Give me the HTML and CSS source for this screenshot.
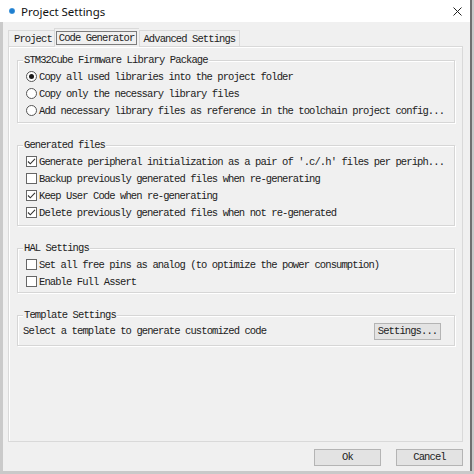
FILE: index.html
```html
<!DOCTYPE html>
<html>
<head>
<meta charset="utf-8">
<link rel="stylesheet" href="styles.css">
</head>
<body>
<div class="window">
  <div class="titlebar">
    <span class="app-icon"></span>
    <span class="title">Project Settings</span>
    <svg class="close" width="9" height="9" viewBox="0 0 9 9"><path d="M0.5 0.5 L8.5 8.5 M8.5 0.5 L0.5 8.5" stroke="#222" stroke-width="1" fill="none"/></svg>
  </div>
  <div class="content">
    <div class="tabs">
      <div class="tab first">Project</div>
      <div class="tab active"><span class="focus">Code Generator</span></div>
      <div class="tab last">Advanced Settings</div>
    </div>
    <div class="panel">
      <div class="group g1">
        <div class="group-title">STM32Cube Firmware Library Package</div>
        <div class="opt"><span class="radio on"></span>Copy all used libraries into the project folder</div>
        <div class="opt"><span class="radio"></span>Copy only the necessary library files</div>
        <div class="opt"><span class="radio"></span>Add necessary library files as reference in the toolchain project config...</div>
      </div>
      <div class="group g2">
        <div class="group-title">Generated files</div>
        <div class="opt"><span class="check on"><svg width="11" height="11" viewBox="0 0 11 11"><path d="M2 5.5 L4.3 7.8 L9 2.8" stroke="#333" stroke-width="1.1" fill="none"/></svg></span>Generate peripheral initialization as a pair of '.c/.h' files per periph...</div>
        <div class="opt"><span class="check"></span>Backup previously generated files when re-generating</div>
        <div class="opt"><span class="check on"><svg width="11" height="11" viewBox="0 0 11 11"><path d="M2 5.5 L4.3 7.8 L9 2.8" stroke="#333" stroke-width="1.1" fill="none"/></svg></span>Keep User Code when re-generating</div>
        <div class="opt"><span class="check on"><svg width="11" height="11" viewBox="0 0 11 11"><path d="M2 5.5 L4.3 7.8 L9 2.8" stroke="#333" stroke-width="1.1" fill="none"/></svg></span>Delete previously generated files when not re-generated</div>
      </div>
      <div class="group g3">
        <div class="group-title">HAL Settings</div>
        <div class="opt"><span class="check"></span>Set all free pins as analog (to optimize the power consumption)</div>
        <div class="opt"><span class="check"></span>Enable Full Assert</div>
      </div>
      <div class="group g4">
        <div class="group-title">Template Settings</div>
        <div class="template-row">
          <span>Select a template to generate customized code</span>
          <button class="btn settings">Settings...</button>
        </div>
      </div>
    </div>
    <div class="buttons">
      <button class="btn dlg">Ok</button>
      <button class="btn dlg">Cancel</button>
    </div>
  </div>
</div>
</body>
</html>
```
FILE: styles.css
```css
html, body {
  margin: 0;
  padding: 0;
}
body {
  width: 474px;
  height: 474px;
  overflow: hidden;
  background: #c9c9c9;
  font-family: "Liberation Mono", monospace;
  color: #222;
}
.window {
  width: 472px;
  height: 471px;
  box-sizing: border-box;
  border-right: 2px solid #707070;
  background: #f0f0f0;
  display: flex;
  flex-direction: column;
}
.titlebar {
  height: 22px;
  flex: none;
  background: #fff;
  display: flex;
  align-items: center;
  padding-left: 9px;
}
.app-icon {
  width: 6px;
  height: 6px;
  border-radius: 50%;
  background: radial-gradient(circle, #1f7fd0 45%, #8fc5ee 100%);
}
.title {
  margin-left: 6px;
  font-family: "Noto Sans", sans-serif;
  font-size: 11.5px;
  color: #111;
}
.close {
  margin-left: auto;
  margin-right: 8px;
}
.content {
  flex: 1;
  display: flex;
  flex-direction: column;
  border-left: 3px solid #cacaca;
  padding: 6px 7px 0 5px;
}
.tabs {
  display: flex;
  align-items: flex-end;
  height: 18px;
  font-size: 10.5px;
  letter-spacing: -0.9px;
}
.tab {
  height: 16px;
  line-height: 16px;
  box-sizing: border-box;
  border-top: 1px solid #dadada;
  border-left: 1px solid #dadada;
  white-space: nowrap;
}
.tab.first {
  padding: 0 2px 0 5px;
}
.tab.active {
  height: 18px;
  padding: 2px 2px 0 1px;
  background: #f0f0f0;
  margin-bottom: -1px;
  height: 19px;
  position: relative;
}
.tab.active .focus {
  display: block;
  height: 14px;
  line-height: 13px;
  border: 1px solid #7c7c7c;
  padding: 0 2px 0 2px;
  box-sizing: border-box;
}
.tab.last {
  padding: 0 4px 0 3px;
  border-right: 1px solid #dadada;
}
.panel {
  height: 396px;
  flex: none;
  box-sizing: border-box;
  border: 1px solid #d9d9d9;
  box-shadow: inset 1px 1px 0 #fff;
  padding: 13px 7px 0 8px;
  font-size: 10.5px;
  letter-spacing: -0.9px;
}
.group {
  border: 1px solid #d6d6d6;
  box-shadow: inset 1px 1px 0 #fff, 1px 1px 0 #fff;
  padding-bottom: 3px;
}
.group + .group {
  margin-top: 22px;
}
.g2 {
  padding-bottom: 4px;
}
.g3 {
  padding-bottom: 2px;
}
.g4 {
  padding-bottom: 5px;
}
.group-title {
  margin: -7px 0 0 5px;
  padding: 0 1px;
  width: fit-content;
  height: 12px;
  line-height: 12px;
  background: #f0f0f0;
  white-space: nowrap;
}
.opt {
  display: flex;
  align-items: center;
  height: 17px;
  padding-left: 8px;
  white-space: nowrap;
}
.g1 .group-title + .opt,
.g2 .group-title + .opt,
.g3 .group-title + .opt {
  margin-top: 2px;
}
.radio, .check {
  flex: none;
  width: 11px;
  height: 11px;
  box-sizing: border-box;
  margin-right: 2px;
  background: #fff;
  position: relative;
}
.radio {
  border: 1px solid #555;
  border-radius: 50%;
}
.radio.on::after {
  content: "";
  position: absolute;
  left: 2px;
  top: 2px;
  width: 5px;
  height: 5px;
  border-radius: 50%;
  background: #1a1a1a;
}
.check {
  border: 1px solid #666;
}
.check svg {
  position: absolute;
  left: -1px;
  top: -1px;
}
.template-row {
  display: flex;
  align-items: center;
  justify-content: space-between;
  height: 18px;
  margin-top: 1px;
  padding: 0 13px 0 5px;
  white-space: nowrap;
}
.btn {
  font-family: "Liberation Mono", monospace;
  font-size: 10.5px;
  letter-spacing: -0.9px;
  color: #222;
  margin: 0;
  padding: 0;
  box-sizing: border-box;
  background: #e3e3e3;
  border: 1px solid #b4b4b4;
  border-radius: 0;
}
.btn.settings {
  width: 67px;
  height: 17px;
  line-height: 15px;
}
.buttons {
  display: flex;
  justify-content: flex-end;
  gap: 15px;
  margin-top: 7px;
}
.btn.dlg {
  width: 67px;
  height: 17px;
  line-height: 15px;
}
```
